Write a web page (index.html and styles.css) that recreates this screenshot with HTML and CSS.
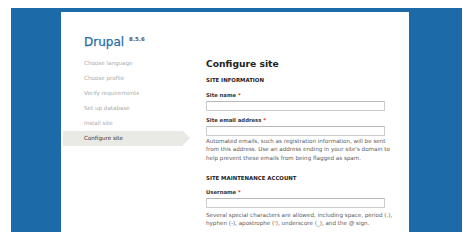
FILE: index.html
```html
<!doctype html>
<html>
<head>
<meta charset="utf-8">
<title>Drupal - Configure site</title>
<link rel="stylesheet" href="styles.css">
</head>
<body>
<div class="frame">
	<div class="card">
		<div class="brand">
			<span class="logo">Drupal</span><span class="ver">8.5.6</span>
		</div>
		<div class="cols">
			<ul class="steps">
				<li>Choose language</li>
				<li>Choose profile</li>
				<li>Verify requirements</li>
				<li>Set up database</li>
				<li>Install site</li>
				<li class="on">Configure site</li>
			</ul>
			<div class="main">
				<h1>Configure site</h1>
				<h2>SITE INFORMATION</h2>
				<label class="lbl">Site name <em>*</em></label>
				<div class="inp"></div>
				<label class="lbl lbl2">Site email address <em>*</em></label>
				<div class="inp"></div>
				<p class="help">Automated emails, such as registration information, will be sent from this address. Use an address ending in your site's domain to help prevent these emails from being flagged as spam.</p>
				<h2 class="sec2">SITE MAINTENANCE ACCOUNT</h2>
				<label class="lbl lbl3">Username <em>*</em></label>
				<div class="inp"></div>
				<p class="help help3">Several special characters are allowed, including space, period (.), hyphen (-), apostrophe ('), underscore (_), and the @ sign.</p>
			</div>
		</div>
	</div>
</div>
</body>
</html>
```

FILE: styles.css
```css
*{margin:0; padding:0; box-sizing:border-box;}
html,body{overflow:hidden; height:100%; background:#fff;}
body{font-family:"DejaVu Sans", "Liberation Sans", sans-serif; color:#333;}
.frame{margin:8px 12px 0 11px; height:224px; background:#1c6aa7; padding:4px 53px 0 50px;}
.card{background:#fff; height:235px;}

.brand{padding:20px 0 0 23px; height:44px; line-height:14px; white-space:nowrap;}
.brand .logo{font-size:12px; color:#1f6ba8; -webkit-text-stroke:0.25px #1f6ba8;}
.brand .ver{font-size:5.5px; color:#555; margin-left:5px; vertical-align:5px; font-weight:bold;}

.cols{display:flex; padding-left:2px;}
.steps{list-style:none; width:143px; font-size:5.6px; color:#aaa;}
.steps li{height:15px; line-height:15px; padding-left:21px; width:127px; position:relative;}
.steps li.on{background:#e9e9e6; color:#333; width:120px;}
.steps li.on:after{content:""; position:absolute; left:120px; top:0; border-left:7px solid #e9e9e6; border-top:7.5px solid transparent; border-bottom:7.5px solid transparent;}

.main{width:179px;}
.main h1{font-size:9.2px; line-height:14px; margin-top:1px; color:#222;}
.main h2{font-size:5.4px; line-height:8px; margin-top:5px; color:#222;}
.main .lbl{display:block; font-size:5.3px; font-weight:bold; line-height:8px; margin-top:7px;}
.main .lbl em{font-style:normal; color:#e62600;}
.main .lbl2{margin-top:5px;}
.main .inp{height:10px; margin-top:2px; border:1px solid #ccc; border-top-color:#b8b8b8; border-radius:1px; background:#fff;}
.main .help{font-size:5.6px; line-height:8.6px; color:#5a5a5a; margin-top:0.7px; width:184px;}
.main .sec2{margin-top:11.5px;}
.main .lbl3{margin-top:6px;}
.main .help3{margin-top:2.7px; width:192px;}
```
